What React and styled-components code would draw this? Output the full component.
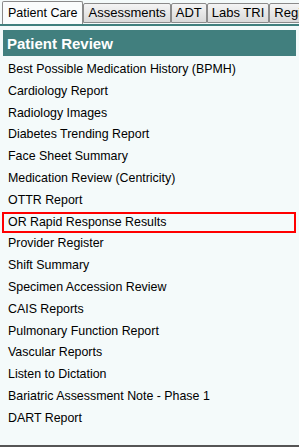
import React from 'react'
import styled, { createGlobalStyle } from 'styled-components'

const Global = createGlobalStyle`
  html, body { margin: 0; padding: 0; background: #f4fafa; }
  body { font-family: Arial, "Liberation Sans", sans-serif; }
`

const tabs = ['Patient Care', 'Assessments', 'ADT', 'Labs TRI', 'Registration']

const items = [
  'Best Possible Medication History (BPMH)',
  'Cardiology Report',
  'Radiology Images',
  'Diabetes Trending Report',
  'Face Sheet Summary',
  'Medication Review (Centricity)',
  'OTTR Report',
  'OR Rapid Response Results',
  'Provider Register',
  'Shift Summary',
  'Specimen Accession Review',
  'CAIS Reports',
  'Pulmonary Function Report',
  'Vascular Reports',
  'Listen to Dictation',
  'Bariatric Assessment Note - Phase 1',
  'DART Report',
]

const Page = styled.div`
  width: 299px;
  height: 447px;
  overflow: hidden;
  box-sizing: border-box;
  border-bottom: 2px solid #555;
  background: #f4fafa;
  display: flex;
  flex-direction: column;
`

const TabBar = styled.div`
  display: flex;
  align-items: flex-end;
  height: 24px;
  padding-left: 2px;
  border-bottom: 2px solid #3f7f7d;
  white-space: nowrap;
  overflow: hidden;
`

const Tab = styled.div`
  flex: none;
  box-sizing: border-box;
  height: ${p => (p.$active ? '23px' : '20px')};
  margin-bottom: ${p => (p.$active ? '0' : '1px')};
  padding: 0 ${p => (p.$active ? '5px' : '4px')};
  font-size: ${p => (p.$active ? '12.5px' : '13px')};
  line-height: ${p => (p.$active ? '22px' : '18px')};
  color: #000;
  background: ${p => (p.$active ? '#fafcfc' : 'linear-gradient(#f4f4f4, #d9d9d9)')};
  border: 1px solid #8a8a8a;
  border-bottom: ${p => (p.$active ? 'none' : '1px solid #8a8a8a')};
  border-radius: 2px 2px 0 0;
`

const Header = styled.div`
  margin: 4px 3px 0 3px;
  height: 26px;
  background: #417f7e;
  color: #fff;
  font-weight: bold;
  font-size: 15px;
  line-height: 27px;
  padding-left: 4px;
`

const List = styled.ul`
  list-style: none;
  margin: 0;
  padding: 3px 0 0 0;
`

const Item = styled.li`
  height: 21.8px;
  box-sizing: border-box;
  margin: 0 3px 0 3px;
  padding-left: 5px;
  font-size: 12.4px;
  line-height: 21px;
  color: #000;
  white-space: nowrap;
  ${p => p.$selected && `
    margin: 0 3px 0 2px;
    padding-left: 4px;
    border: 2px solid #f00;
    line-height: 17px;
  `}
`

export default function App() {
  return (
    <>
      <Global />
      <Page>
        <TabBar>
          {tabs.map((t, i) => (
            <Tab key={t} $active={i === 0}>{t}</Tab>
          ))}
        </TabBar>
        <Header>Patient Review</Header>
        <List>
          {items.map(it => (
            <Item key={it} $selected={it === 'OR Rapid Response Results'}>{it}</Item>
          ))}
        </List>
      </Page>
    </>
  )
}
